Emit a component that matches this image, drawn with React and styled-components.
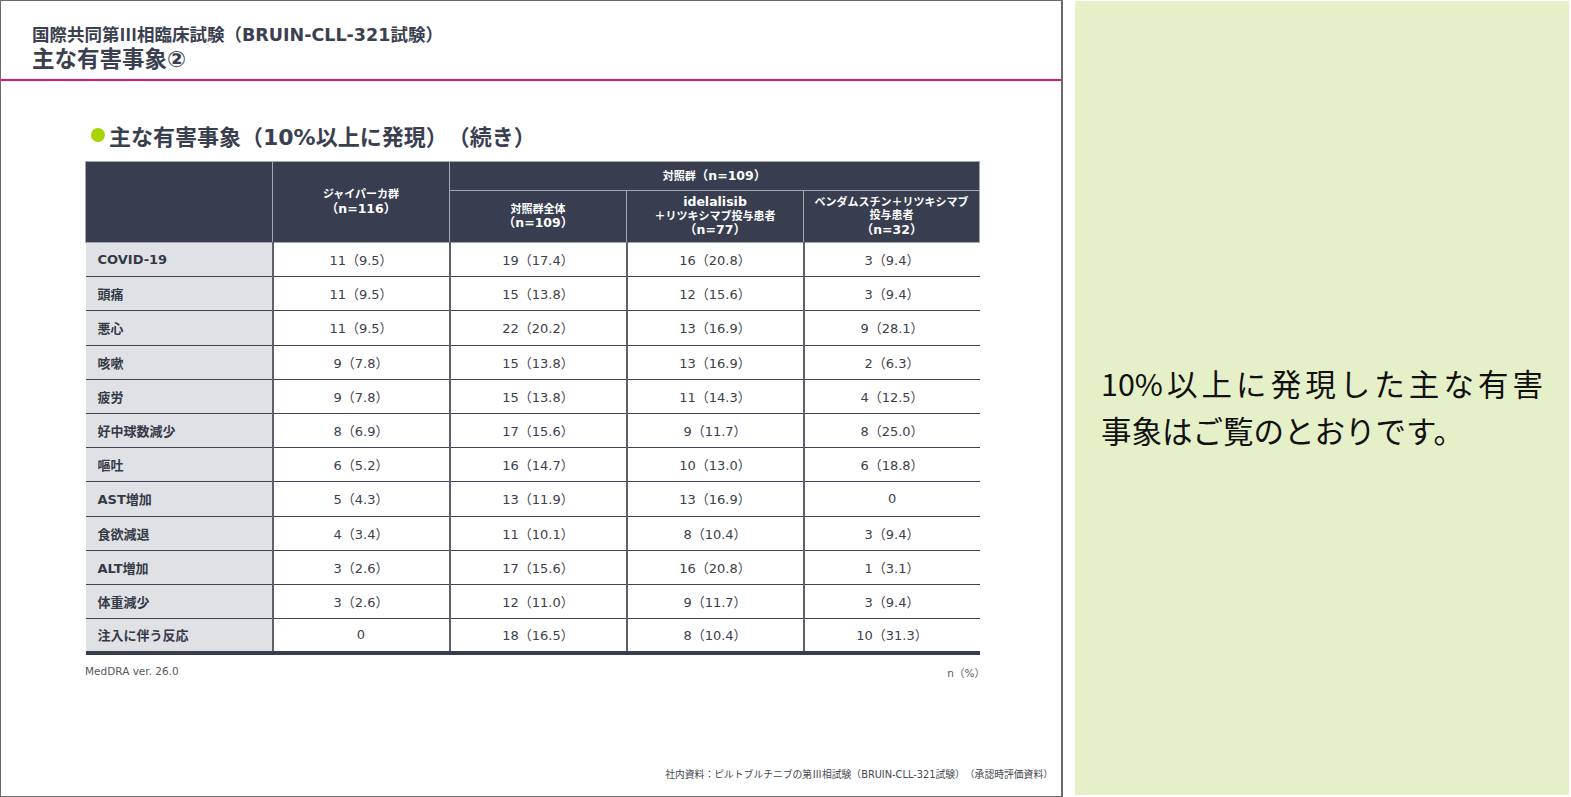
import styled, { createGlobalStyle } from "styled-components";

const GlobalStyle = createGlobalStyle`
  html, body {
    margin: 0;
    padding: 0;
    background: #ffffff;
  }
  body {
    font-family: "DejaVu Sans", "Noto Sans CJK JP", sans-serif;
    text-spacing-trim: space-all;
  }
`;

const rows = [
  ["COVID-19", "11（9.5)", "19（17.4)", "16（20.8)", "3（9.4)"],
  ["頭痛", "11（9.5)", "15（13.8)", "12（15.6)", "3（9.4)"],
  ["悪心", "11（9.5)", "22（20.2)", "13（16.9)", "9（28.1)"],
  ["咳嗽", "9（7.8)", "15（13.8)", "13（16.9)", "2（6.3)"],
  ["疲労", "9（7.8)", "15（13.8)", "11（14.3)", "4（12.5)"],
  ["好中球数減少", "8（6.9)", "17（15.6)", "9（11.7)", "8（25.0)"],
  ["嘔吐", "6（5.2)", "16（14.7)", "10（13.0)", "6（18.8)"],
  ["AST増加", "5（4.3)", "13（11.9)", "13（16.9)", "0"],
  ["食欲減退", "4（3.4)", "11（10.1)", "8（10.4)", "3（9.4)"],
  ["ALT増加", "3（2.6)", "17（15.6)", "16（20.8)", "1（3.1)"],
  ["体重減少", "3（2.6)", "12（11.0)", "9（11.7)", "3（9.4)"],
  ["注入に伴う反応", "0", "18（16.5)", "8（10.4)", "10（31.3)"],
];

export default function App() {
  return (
    <>
      <GlobalStyle />
      <Page>
        <Slide>
          <Header>
            <Kicker>
              国際共同第<Cjk>Ⅲ</Cjk>相臨床試験（BRUIN-CLL-321試験）
            </Kicker>
            <Title>主な有害事象②</Title>
          </Header>

          <Body>
            <SectionTitle>
              <Dot />
              主な有害事象（10%以上に発現）（続き）
            </SectionTitle>

            <Table>
              <colgroup>
                <col style={{ width: 187 }} />
                <col style={{ width: 177 }} />
                <col style={{ width: 177 }} />
                <col style={{ width: 177 }} />
                <col style={{ width: 176 }} />
              </colgroup>
              <thead>
                <tr>
                  <Th rowSpan={2} />
                  <Th rowSpan={2}>
                    ジャイパーカ群
                    <br />
                    <Latin>（n=116）</Latin>
                  </Th>
                  <Th colSpan={3} $short>
                    対照群<Latin>（n=109）</Latin>
                  </Th>
                </tr>
                <tr>
                  <Th>
                    対照群全体
                    <br />
                    <Latin>（n=109）</Latin>
                  </Th>
                  <Th>
                    <Latin>idelalisib</Latin>
                    <br />
                    ＋リツキシマブ投与患者
                    <br />
                    <Latin>（n=77）</Latin>
                  </Th>
                  <Th>
                    ベンダムスチン＋リツキシマブ
                    <br />
                    投与患者
                    <br />
                    <Latin>（n=32）</Latin>
                  </Th>
                </tr>
              </thead>
              <tbody>
                {rows.map((r, i) => (
                  <Row key={r[0]} $last={i === rows.length - 1}>
                    <Label>{r[0]}</Label>
                    {r.slice(1).map((v, j) => (
                      <Cell key={j}>{v.replace(")", "）")}</Cell>
                    ))}
                  </Row>
                ))}
              </tbody>
            </Table>

            <Notes>
              <span>MedDRA ver. 26.0</span>
              <Unit>n（%）</Unit>
            </Notes>
          </Body>

          <Source>
            社内資料：ピルトブルチニブの第<Cjk>Ⅲ</Cjk>相試験（BRUIN-CLL-321試験）（承認時評価資料）
          </Source>
        </Slide>

        <Aside>
          <AsideText>
            <AsideLine $justify>10%以上に発現した主な有害</AsideLine>
            <AsideLine>事象はご覧のとおりです。</AsideLine>
          </AsideText>
        </Aside>
      </Page>
    </>
  );
}

const Page = styled.div`
  display: flex;
  width: 1571px;
  height: 797px;
  gap: 12px;
  box-sizing: border-box;
`;

const Slide = styled.div`
  width: 1063px;
  height: 797px;
  flex: none;
  box-sizing: border-box;
  border: 1px solid #6a6a6a;
  border-right-width: 2px;
  display: flex;
  flex-direction: column;
  background: #ffffff;
`;

const Cjk = styled.span`
  font-family: "Noto Sans CJK JP", sans-serif;
`;

const Header = styled.div`
  height: 80px;
  box-sizing: border-box;
  padding: 22px 0 0 31px;
  border-bottom: 2px solid #e5147c;
  color: #3b4050;
  font-weight: 700;
`;

const Kicker = styled.div`
  font-size: 17.5px;
  line-height: 22px;
`;

const Title = styled.div`
  font-size: 22.5px;
  line-height: 26px;
`;

const Body = styled.div`
  padding: 38px 0 0 84px;
  width: 894px;
`;

const SectionTitle = styled.div`
  display: flex;
  align-items: center;
  gap: 4px;
  padding-left: 6px;
  font-size: 22px;
  font-weight: 700;
  color: #3a3f50;
  height: 32px;
  margin-bottom: 10px;
`;

const Dot = styled.span`
  width: 14px;
  height: 14px;
  border-radius: 50%;
  background: #a8d400;
  flex: none;
`;

const Table = styled.table`
  width: 894px;
  border-collapse: collapse;
  table-layout: fixed;
  font-size: 13px;
`;

const Th = styled.th`
  background: #383d4f;
  color: #ffffff;
  font-weight: 700;
  font-size: 11px;
  line-height: 13.5px;
  text-align: center;
  vertical-align: middle;
  border: 1.5px solid #a3a7b0;
  height: ${(p) => (p.$short ? "28px" : "51px")};
  padding: 0;
`;

const Latin = styled.span`
  font-size: 12.5px;
`;

const Row = styled.tr`
  height: 34.2px;
  td {
    border-bottom: ${(p) => (p.$last ? "4px solid #383d4f" : "1.5px solid #3f4454")};
  }
`;

const Label = styled.td`
  background: #e0e1e5;
  color: #363a47;
  font-weight: 700;
  padding: 0 0 0 12px;
  border-right: 2px solid #5c606d;
`;

const Cell = styled.td`
  text-align: center;
  color: #3d404a;
  padding: 0;
  border-right: 2px solid #5c606d;
  &:last-child {
    border-right: none;
  }
`;

const Notes = styled.div`
  display: flex;
  justify-content: space-between;
  margin-top: 10px;
  font-size: 10.5px;
  color: #555861;
`;

const Unit = styled.span`
  margin-right: -6px;
`;

const Source = styled.div`
  margin-top: auto;
  padding: 0 8px 15px 0;
  text-align: right;
  font-size: 9.8px;
  color: #444750;
`;

const Aside = styled.div`
  flex: 1;
  margin: 1px 2px 2px 0;
  background: #e5f0c9;
  display: flex;
  align-items: center;
  padding: 18px 0 0 26px;
`;

const AsideText = styled.div`
  width: 442px;
  font-family: "Noto Sans CJK JP", sans-serif;
  font-size: 30.5px;
  line-height: 47px;
  color: #111111;
`;

const AsideLine = styled.div`
  text-align: ${(p) => (p.$justify ? "justify" : "left")};
  text-align-last: ${(p) => (p.$justify ? "justify" : "left")};
`;
